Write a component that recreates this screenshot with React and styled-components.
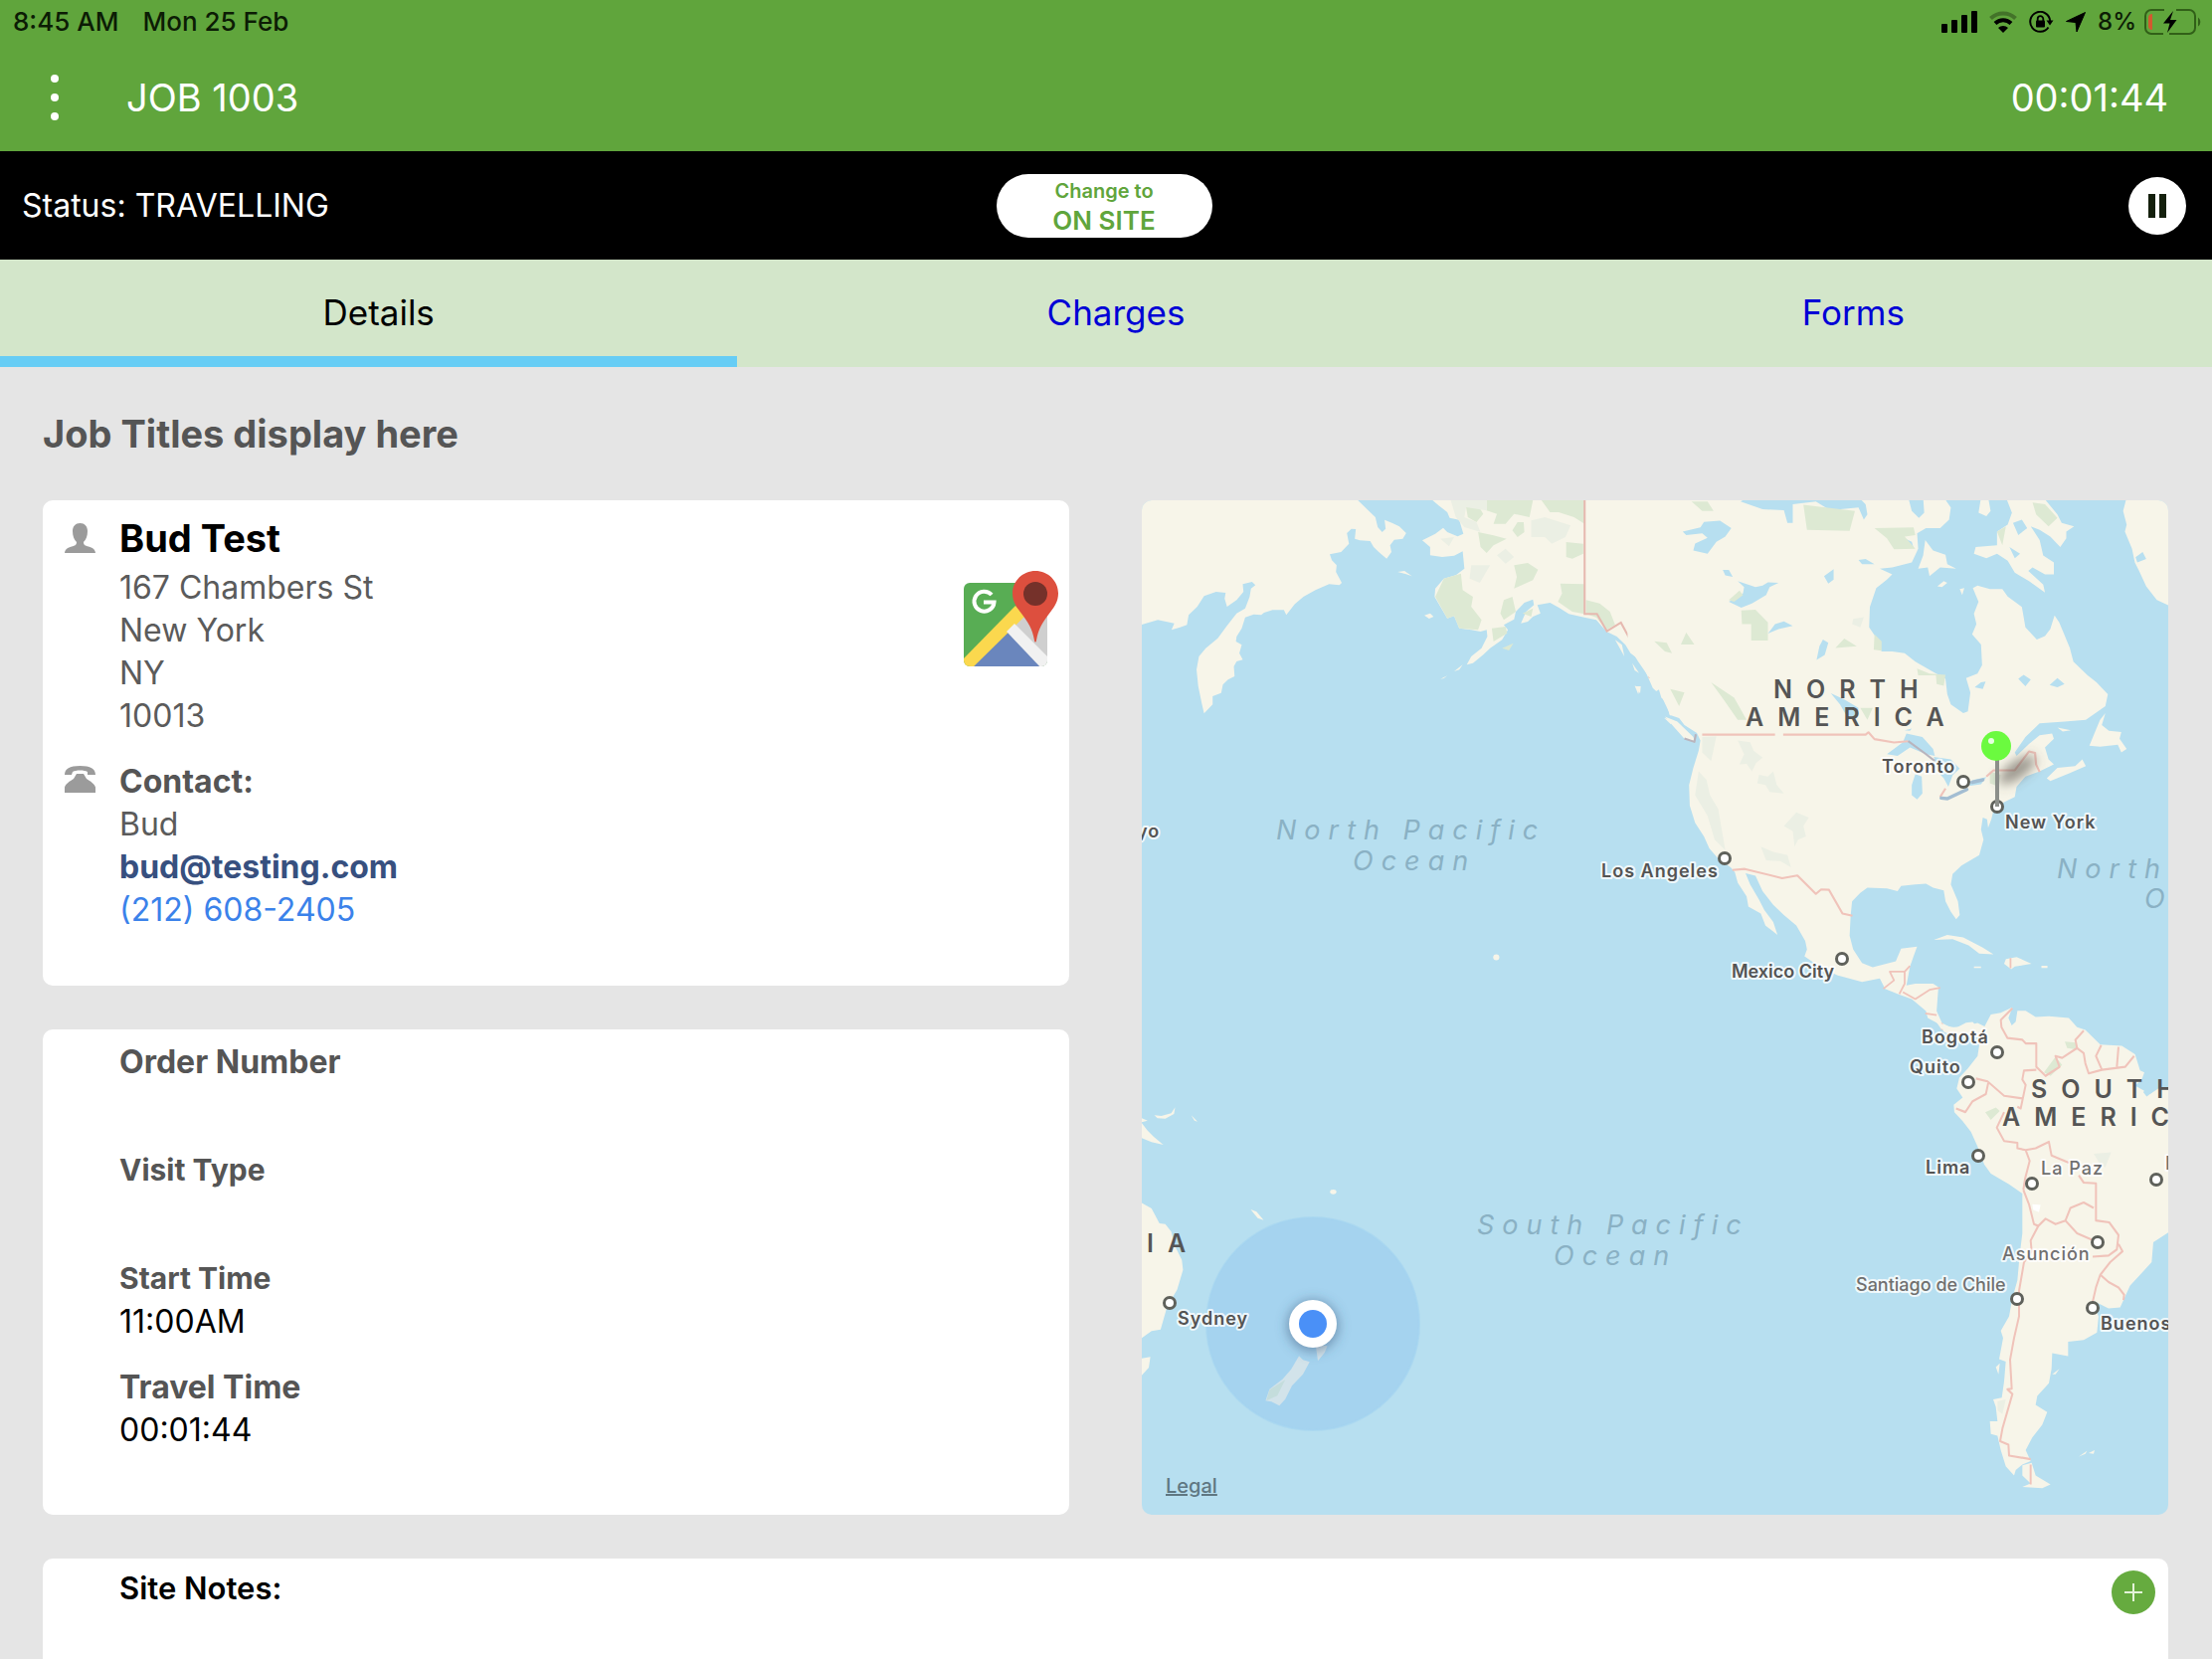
import React from "react";
import styled, { createGlobalStyle } from "styled-components";

const GlobalStyle = createGlobalStyle`
  *, *::before, *::after { box-sizing: border-box; }
  html, body { margin: 0; padding: 0; }
  body {
    background: #e5e5e5;
    color: #000;
    font-family: Inter, "Liberation Sans", sans-serif;
    font-size: 32px;
    line-height: 43px;
  }
  h1, h2, h3, p, dl, dt, dd { margin: 0; font: inherit; }
  button { border: 0; padding: 0; font: inherit; cursor: pointer; }
  a { text-decoration: none; }
  svg { display: block; }
`;

const Page = styled.div`
  height: 100vh;
  display: flex;
  flex-direction: column;
  overflow: hidden;
`;

/* ---------- header ---------- */

const Header = styled.header`
  flex: none;
  background: #60a53c;
`;

const SystemBar = styled.div`
  display: flex;
  justify-content: space-between;
  align-items: center;
  height: 44px;
  padding: 0 11px 0 13px;
  color: #0c1c05;
  line-height: 30px;
  font-weight: 500;
`;

const SystemGroup = styled.div`
  display: flex;
  align-items: center;
  gap: ${(p) => p.$gap}px;
  font-size: ${(p) => (p.$compact ? 24 : 26)}px;
`;

const Toolbar = styled.div`
  display: flex;
  align-items: center;
  height: 108px;
  padding: 0 44px 0 40px;
  color: #fff;
  font-size: 38px;
  line-height: 48px;
`;

const MenuButton = styled.button`
  display: flex;
  justify-content: center;
  align-items: center;
  width: 30px;
  height: 60px;
  margin-right: 57px;
  background: none;
`;

const ToolbarTitle = styled.h1`
  flex: 1;
`;

const Timer = styled.span``;

const StatusBar = styled.section`
  flex: none;
  display: grid;
  grid-template-columns: 1fr auto 1fr;
  align-items: center;
  height: 109px;
  padding: 0 26px 0 22px;
  background: #000;
  color: #fff;
`;

const StatusText = styled.span`
  font-size: 32px;
`;

const PillButton = styled.button`
  display: flex;
  flex-direction: column;
  align-items: center;
  justify-content: center;
  width: 217px;
  height: 64px;
  border-radius: 32px;
  background: #fff;
  color: #60a53c;
  line-height: 30px;
`;

const PillHint = styled.span`
  font-size: 20px;
  font-weight: 600;
`;

const PillAction = styled.span`
  font-size: 26px;
  font-weight: 600;
`;

const RoundButton = styled.button`
  justify-self: end;
  display: flex;
  align-items: center;
  justify-content: center;
  width: ${(p) => p.$size}px;
  height: ${(p) => p.$size}px;
  border-radius: 50%;
  background: ${(p) => p.$color};
`;

const Tabs = styled.nav`
  flex: none;
  display: grid;
  grid-template-columns: repeat(3, 1fr);
  height: 108px;
  background: #d3e6ca;
`;

const Tab = styled.a`
  display: flex;
  align-items: center;
  justify-content: center;
  padding: 10px 0 0 20px;
  border-bottom: 11px solid ${(p) => (p.$active ? "#66cdf5" : "transparent")};
  color: ${(p) => (p.$active ? "#000" : "#0000d6")};
  font-size: 35px;
`;

/* ---------- content ---------- */

const Main = styled.main`
  flex: 1;
  min-height: 0;
  display: flex;
  flex-direction: column;
  padding: 0 44px 0 43px;
`;

const JobTitle = styled.h2`
  padding: 43px 0;
  color: #555;
  font-size: 38px;
  line-height: 48px;
  font-weight: 700;
`;

const Columns = styled.div`
  flex: none;
  display: grid;
  grid-template-columns: 1fr 1fr;
  gap: 73px;
`;

const Cards = styled.div`
  display: grid;
  grid-auto-rows: 1fr;
  gap: 44px;
`;

const Card = styled.section`
  display: flex;
  flex-direction: column;
  gap: 23px;
  padding: ${(p) => p.$top}px 10px 55px 22px;
  border-radius: 10px;
  background: #fff;
`;

const Entry = styled.div`
  display: grid;
  grid-template-columns: 31px 1fr auto;
  column-gap: 24px;
  align-items: start;
`;

const EntryIcon = styled.span`
  padding-top: ${(p) => p.$top}px;
`;

const EntryBody = styled.div`
  grid-column: 2;
`;

const ClientName = styled.h3`
  margin-bottom: 4px;
  font-size: 38px;
  line-height: 48px;
  font-weight: 700;
`;

const Line = styled.p`
  color: #5b5b5b;
`;

const Label = styled.p`
  color: #555;
  font-size: ${(p) => (p.$small ? 30 : 32)}px;
  font-weight: 700;
`;

const Value = styled.p`
  min-height: 43px;
`;

const EmailLink = styled.a`
  display: block;
  color: #37507f;
  font-weight: 700;
`;

const PhoneLink = styled.a`
  display: block;
  color: #3b82ea;
`;

const MapsButton = styled.button`
  margin-top: 57px;
  background: none;
`;

const NotesCard = styled.section`
  flex: 1;
  display: flex;
  justify-content: space-between;
  align-items: flex-start;
  margin-top: 44px;
  padding: 8px 13px 0 77px;
  border-radius: 10px 10px 0 0;
  background: #fff;
`;

const NotesTitle = styled.h3`
  font-size: 31px;
  font-weight: 600;
`;

const NotesAction = styled.div`
  padding-top: 4px;
`;

/* ---------- map ---------- */

const MapPanel = styled.section`
  position: relative;
  overflow: hidden;
  min-height: 0;
  border-radius: 10px;
  background: #b7dff0;
`;

const MapSvg = styled.svg`
  position: absolute;
  inset: 0;
  width: 100%;
  height: 100%;
`;

const Legal = styled.a`
  position: absolute;
  left: 24px;
  bottom: 16px;
  color: #5f7782;
  font-size: 20px;
  line-height: 26px;
  font-weight: 500;
  text-decoration: underline;
`;

const CityText = styled.text`
  fill: ${(p) => (p.$minor ? "#707070" : "#545454")};
  stroke: #ffffffcc;
  stroke-width: 4px;
  stroke-linejoin: round;
  paint-order: stroke;
  font-size: 18px;
  font-weight: ${(p) => (p.$minor ? 500 : 600)};
  letter-spacing: ${(p) => (p.$long ? 0 : 1)}px;
`;

const ContinentText = styled.text`
  fill: #555;
  font-size: 25px;
  font-weight: 600;
  letter-spacing: 14px;
`;

const OceanText = styled.text`
  fill: #8ab1c4;
  font-size: 27px;
  font-style: italic;
  letter-spacing: 8px;
`;

const LAND = "#f7f5e9";
const WATER = "#b7dff0";
const PARK = "#dde9d3";
const PALE = "#ebefe4";

const CITIES = [
  { name: "Los Angeles", x: 1734, y: 863, tx: 1610, ty: 882 },
  { name: "Toronto", x: 1974, y: 786, tx: 1892, ty: 777 },
  { name: "New York", x: 2008, y: 811, tx: 2016, ty: 833 },
  { name: "Mexico City", x: 1852, y: 964, tx: 1741, ty: 983, long: true },
  { name: "Bogotá", x: 2008, y: 1058, tx: 1932, ty: 1049 },
  { name: "Quito", x: 1979, y: 1088, tx: 1920, ty: 1079 },
  { name: "Lima", x: 1989, y: 1162, tx: 1936, ty: 1180 },
  { name: "La Paz", x: 2043, y: 1190, tx: 2052, ty: 1181, minor: true },
  { name: "B", x: 2168, y: 1186, tx: 2177, ty: 1176, minor: true },
  { name: "Asunción", x: 2109, y: 1249, tx: 2013, ty: 1267, minor: true },
  { name: "Santiago de Chile", x: 2028, y: 1306, tx: 1866, ty: 1298, minor: true, long: true },
  { name: "Buenos", x: 2104, y: 1315, tx: 2112, ty: 1337 },
  { name: "Sydney", x: 1176, y: 1310, tx: 1184, ty: 1332 },
];

function BeringRegion() {
  return (
    <g transform="translate(1140 500) scale(.3444 .3333)">
      <g fill={LAND}>
        <path d="M20,0 L645,0 L680,35 L705,60 L712,90 L725,105 L735,95 L732,68 L755,78 L775,88 L795,108 L785,125 L760,128 L748,145 L752,165 L738,185 L715,165 L700,150 L690,132 L660,130 L645,125 L648,96 L635,95 L622,108 L628,140 L605,165 L572,172 L578,190 L592,205 L590,225 L607,258 L600,265 L570,262 L530,280 L495,300 L470,322 L445,355 L438,340 L405,340 L380,348 L372,355 L350,353 L325,362 L315,395 L300,420 L298,435 L315,445 L308,470 L318,490 L300,495 L292,510 L294,540 L275,550 L260,565 L255,590 L230,600 L230,625 L205,652 L198,620 L188,570 L183,520 L190,480 L210,455 L245,425 L270,390 L300,350 L325,335 L338,300 L342,275 L355,265 L345,255 L318,262 L320,285 L300,310 L272,330 L265,305 L268,288 L240,285 L205,298 L185,330 L160,355 L155,385 L135,392 L110,400 L118,380 L70,370 L20,385Z" />
        <path d="M862,0 L890,25 L915,45 L922,62 L950,68 L962,110 L945,118 L915,105 L903,92 L880,110 L842,130 L865,150 L865,175 L900,180 L935,176 L960,163 L965,215 L940,235 L905,245 L880,275 L878,300 L895,330 L915,365 L935,358 L950,395 L985,400 L1012,405 L1030,400 L1032,420 L1015,455 L985,480 L972,505 L990,500 L1020,475 L1040,455 L1075,430 L1092,400 L1080,385 L1110,368 L1115,345 L1140,318 L1165,308 L1168,325 L1145,345 L1130,380 L1150,375 L1165,360 L1187,350 L1178,325 L1215,318 L1240,332 L1270,352 L1315,362 L1350,370 L1380,405 L1410,420 L1435,445 L1450,470 L1478,492 L1500,540 L1515,575 L1525,585 L1540,575 L1545,610 L1568,660 L1568,0Z" />
        <path d="M935,525 L960,505 L950,520Z M895,548 L915,538 L905,546Z M770,225 L790,222 L812,238 L795,232Z M848,356 L865,350 L875,360 L862,366Z M1465,570 L1480,570 L1478,592Z M1405,430 L1425,445 L1432,480Z M1455,500 L1475,530 L1462,522Z M1548,665 L1568,672 L1568,685Z" />
        <circle cx="1058" cy="1388" r="9" />
      </g>
      <g fill={PARK}>
        <path d="M970,30 L1005,25 L1020,50 L1000,75 L975,60Z M1030,9 H1165 L1155,60 L1110,50 L1085,80 L1050,80 L1060,50 L1030,40Z M1105,100 L1120,75 L1138,75 L1140,105 L1120,120Z M1005,105 L1050,115 L1088,125 L1050,145 L1030,168 L1012,150Z M1190,9 H1316 V80 L1285,60 L1240,45 L1215,45Z M1262,135 L1312,140 V170 L1280,185 L1262,180Z M1110,205 L1150,198 L1180,218 L1165,250 L1110,275 L1118,240Z M1245,260 L1316,262 V352 L1280,345 L1238,315 L1250,290Z M905,245 L955,230 L960,280 L990,300 L985,330 L1015,370 L1005,400 L950,395 L935,358 L915,365 L880,300Z M1080,310 L1105,300 L1115,345 L1080,370 L1070,350Z M1045,395 L1085,390 L1090,410 L1050,435Z M1135,350 L1165,335 L1160,360Z M1075,455 L1108,440 L1095,462Z M1320,310 L1360,320 L1390,345 L1405,385 L1380,400 L1350,362 L1320,352Z M1520,432 L1568,445 V475Z" />
      </g>
      <path fill={PALE} d="M925,9 H1030 L1030,40 L970,30 L965,60 L1000,75 L1012,105 L965,90 L940,60Z M1160,70 L1200,60 L1275,85 L1260,120 L1220,140 L1200,120 L1160,120Z M985,205 L1040,205 L1010,258 L980,245Z M1060,175 L1085,155 L1110,180 L1085,200Z M895,125 L935,120 L920,148Z" />
      <path fill="none" stroke="#e6b9b0" strokeWidth="6" d="M1316,9 V352 H1352 L1381,404 L1422,378 L1470,470 L1512,497 L1505,545" />
    </g>
  );
}

function NorthAmerica() {
  return (
    <g transform="translate(1640 500) scale(.35714 .34436)">
      <g fill={LAND}>
        <path d="M-10,0 L-10,430 L20,480 L50,525 L75,550 L85,585 L100,600 L108,635 L135,645 L150,665 L185,688 L195,710 L190,740 L175,790 L163,840 L165,900 L180,950 L205,990 L220,1025 L245,1055 L280,1080 L292,1095 L300,1125 L325,1165 L330,1195 L365,1215 L378,1250 L412,1278 L400,1240 L375,1205 L360,1175 L335,1130 L322,1098 L350,1105 L370,1150 L400,1190 L430,1220 L465,1250 L490,1295 L495,1320 L488,1340 L530,1370 L580,1395 L650,1415 L700,1405 L715,1435 L755,1452 L790,1465 L830,1500 L835,1520 L870,1540 L880,1560 L900,1570 L1010,1580 L1005,1550 L975,1535 L940,1545 L900,1548 L875,1535 L860,1500 L865,1430 L850,1420 L800,1420 L775,1425 L785,1370 L795,1340 L805,1312 L760,1318 L745,1355 L680,1372 L650,1360 L625,1320 L615,1280 L618,1220 L622,1180 L645,1155 L665,1140 L720,1142 L750,1150 L760,1135 L800,1130 L830,1128 L850,1140 L880,1148 L885,1180 L900,1210 L915,1232 L925,1220 L920,1180 L900,1130 L905,1100 L930,1075 L980,1045 L992,1000 L985,970 L990,935 L1002,940 L1005,965 L1014,940 L1020,915 L1050,890 L1080,875 L1085,845 L1110,815 L1150,800 L1190,780 L1175,765 L1165,730 L1190,705 L1185,690 L1150,695 L1120,720 L1085,755 L1080,745 L1110,700 L1150,660 L1220,655 L1280,650 L1335,610 L1342,575 L1310,540 L1285,520 L1245,480 L1235,440 L1215,390 L1205,365 L1192,345 L1180,385 L1165,405 L1142,415 L1110,380 L1100,320 L1060,290 L1045,268 L1010,268 L975,258 L962,265 L978,305 L965,340 L972,370 L960,400 L985,430 L988,490 L975,515 L943,528 L955,570 L948,625 L935,630 L900,605 L890,575 L885,530 L850,510 L800,480 L770,455 L735,450 L705,450 L690,410 L670,380 L672,320 L690,265 L720,240 L735,225 L700,208 L735,205 L790,190 L808,150 L805,105 L830,90 L870,90 L895,65 L900,30 L880,0Z" />
        <path d="M1055,0 L1160,0 L1200,50 L1212,75 L1247,85 L1225,100 L1225,120 L1208,145 L1180,115 L1150,95 L1125,85 L1150,125 L1160,170 L1190,190 L1190,225 L1165,225 L1130,205 L1118,215 L1160,255 L1165,278 L1120,245 L1080,220 L1060,185 L1030,165 L1000,178 L965,165 L970,145 L1030,140 L1030,100 L1060,80 L1072,45Z" />
        <path d="M828,125 L850,155 L885,168 L890,195 L915,208 L870,205 L840,230 L835,205 L808,208 L822,170Z M985,0 L1005,0 L1012,40 L1000,55 L978,45Z M862,260 L880,245 L890,250 L875,262Z M925,268 L938,265 L932,285Z" />
        <path d="M1395,0 L1512,0 V315 L1480,300 L1450,260 L1430,215 L1418,190 L1410,150 L1390,100 L1395,80 L1385,40Z" />
        <path d="M1335,630 L1325,665 L1345,682 L1380,685 L1375,705 L1395,735 L1380,745 L1370,722 L1320,728 L1290,725 L1300,700 L1320,650Z M1170,820 L1200,790 L1250,785 L1270,765 L1280,785 L1235,805 L1180,828Z M1200,672 L1238,680 L1215,684Z M95,640 L130,655 L175,700 L180,715 L150,705 L120,670Z M10,550 L25,555 L20,575Z" />
        <path d="M852,1292 L890,1278 L935,1285 L990,1315 L1020,1334 L980,1332 L950,1308 L905,1290Z M1055,1348 L1085,1342 L1127,1362 L1080,1370 L1070,1378 L1050,1362Z M965,1370 L985,1370 L985,1374 L965,1374Z M1155,1368 H1172 V1374 H1155Z" />
      </g>
      <g fill={WATER}>
        <path d="M308,12 L330,0 L640,0 L660,20 L665,50 L655,65 L640,30 L560,38 L520,12 L455,20 L455,75 L440,75 L430,38 L370,35Z M780,0 L822,0 L825,45 L810,60 L790,40Z" />
        <path d="M145,100 L195,88 L205,72 L250,68 L282,90 L265,115 L240,130 L215,165 L175,155 L180,135 L215,118 L200,105 L155,110Z M275,305 L315,280 L318,262 L300,245 L350,262 L370,258 L385,248 L415,250 L390,262 L380,285 L340,310 L310,322Z M258,212 L275,212 L286,232 L265,228Z M570,210 L570,240 L555,252 L543,230Z M385,398 L405,370 L430,362 L455,375 L415,385Z M540,415 L555,425 L545,460 L522,475 L530,435Z M562,572 L600,590 L640,615 L635,645 L605,635 L588,605Z" />
        <path d="M720,750 L765,715 L775,690 L820,700 L850,735 L855,755 L830,750 L785,730 L750,755Z M800,808 L818,815 L820,865 L805,882 L790,870 L790,840Z M852,758 L900,765 L925,792 L905,812 L893,845 L880,820 L862,800Z M945,835 L965,825 L1000,817 L985,838 L955,842Z M967,555 L985,540 L998,538 L990,560Z M1090,530 L1105,518 L1125,532 L1110,552Z M1178,548 L1200,528 L1220,545 L1200,555Z M1075,75 L1100,65 L1115,90 L1090,110Z M1065,145 L1095,165 L1080,178Z M1420,175 L1440,160 L1450,180 L1425,190Z M640,183 L660,180 L685,195 L650,195Z M750,110 L790,130 L795,148 L765,140Z M790,675 L770,680 L785,682Z" />
      </g>
      <path fill={PARK} d="M485,22 L630,40 L615,98 L495,95Z M170,12 H215 L232,40 L200,40Z M685,90 L795,88 L800,110 L770,115 L800,150 L740,152 L720,120Z M310,330 L350,328 L385,365 V418 H338 V370 H312Z M225,540 L290,585 L325,650 L300,650 L260,590Z M65,420 L100,425 L115,455 L95,450Z M140,430 L155,395 L178,430Z M110,560 L150,570 L135,610Z M575,440 L600,412 L635,435Z M685,400 L705,420 L705,448 L683,445Z M805,500 L840,515 L885,518 L880,550 L860,545 L858,520 L808,520Z M1130,15 L1165,20 L1200,60 L1175,85 L1140,50Z M1030,100 L1055,85 L1045,140Z M275,300 L305,272 L315,285 L290,305Z M645,615 L680,615 L665,650Z M1010,800 L1040,810 L1035,845 L1010,835Z" />
      <path fill={PALE} d="M200,700 L240,698 L225,770 L200,745Z M300,710 L335,715 L345,740 L370,760 L352,775 L340,800 L325,778 L305,780 L318,750Z M360,810 L385,815 L400,800 L410,840 L430,865 L390,860 L378,840 L355,835Z M190,800 L212,825 L222,870 L245,910 L265,1030 L235,1000 L215,930 L180,870Z M430,960 L465,920 L500,935 L485,960 L492,990 L470,1000 L460,1020 L455,975Z M365,1020 L400,1035 L440,1045 L450,1080 L420,1062 L380,1060Z M625,355 L655,350 L645,380 L622,370Z" />
      <g fill="none" stroke="#f0c3ba" strokeWidth="6" strokeLinejoin="round">
        <path d="M200,693 H405 M428,693 H660 L668,686 L685,706 L740,716 L780,712" />
        <path d="M285,1088 L320,1085 L425,1112 L468,1104 L520,1158 L535,1145 L557,1146 L595,1215 L623,1222" />
        <path d="M1000,815 L1020,797 L1080,797 L1120,742 L1137,746 L1140,780 L1150,802 M870,875 L885,850" />
        <path d="M710,1435 L740,1410 L728,1385 H770 L785,1368 M770,1385 V1420 L755,1450 M765,1445 L800,1465 L840,1438 L870,1432 M828,1507 L860,1512 M875,1535 V1555 M1068,1345 V1375" strokeWidth="5" />
      </g>
      <path fill="none" stroke="#b9b4bd" strokeWidth="6" strokeLinejoin="round" d="M780,712 L830,750 L855,770 M150,704 L178,714 L182,692" />
      <path fill="none" stroke="#a3bdd2" strokeWidth="10" strokeLinecap="round" d="M873,878 L890,880 L945,853 M960,832 L990,825" />
    </g>
  );
}

function SouthAmerica() {
  return (
    <g transform="translate(1700 960) scale(.33333 .36351)">
      <g fill={LAND}>
        <path d="M735,178 L765,195 L800,202 L830,188 L850,186 L870,205 L885,200 L905,165 L935,160 L970,145 L958,175 L968,195 L980,185 L985,155 L1010,155 L1040,172 L1080,170 L1140,175 L1165,200 L1190,208 L1235,248 L1300,252 L1340,275 L1355,320 L1368,325 L1360,345 L1340,362 L1385,385 L1410,370 L1445,375 V765 L1395,795 L1390,850 L1355,885 L1325,915 L1310,945 L1295,975 L1260,978 L1210,955 L1230,1000 L1225,1045 L1185,1065 L1138,1070 L1138,1110 L1090,1102 L1088,1145 L1080,1185 L1045,1220 L1040,1245 L1075,1265 L1060,1300 L1030,1335 L1010,1370 L1025,1400 L1000,1410 L980,1425 L975,1440 L950,1415 L935,1370 L925,1330 L905,1325 L902,1290 L925,1290 L920,1250 L912,1230 L938,1225 L945,1180 L950,1125 L930,1118 L942,1060 L935,1040 L960,1000 L970,950 L985,900 L992,830 L1000,770 L1000,660 L960,635 L905,605 L885,580 L865,530 L845,490 L820,460 L795,435 L793,415 L820,395 L802,370 L810,340 L835,315 L865,280 L870,250 L868,220 L860,205 L840,198 L800,212 L755,205Z" />
        <path d="M1000,1412 L1028,1405 L1040,1440 L1085,1465 L1060,1475 L1000,1472 L1025,1462 L1000,1440Z M1170,1388 L1195,1372 L1190,1380Z M1200,1378 L1218,1370 L1215,1380Z M1090,1160 L1112,1145 L1100,1160Z M920,1140 L932,1130 L928,1160Z" />
      </g>
      <path fill={PARK} d="M1065,325 L1100,282 L1120,305 L1085,335Z M1128,240 L1160,243 L1165,262 L1135,258Z M888,435 L920,422 L932,432 L905,457Z" />
      <path fill={PALE} d="M1215,550 L1268,546 L1250,588 L1235,580Z M925,1235 L950,1230 L940,1270 L925,1260Z" />
      <path fill={WATER} d="M1365,380 L1380,352 L1415,362 L1385,385 L1375,392Z" />
      <path fill="#fff" d="M1030,690 L1055,692 L1050,712 L1032,705Z" />
      <g fill="none" stroke="#f0c3ba" strokeWidth="6" strokeLinejoin="round">
        <path d="M970,148 L935,180 L937,200 L955,230 L1000,235 L1010,245 L1042,245 L1042,310 L1070,335 L1112,310 L1100,280 L1120,285 L1165,258 L1160,235 L1185,210" />
        <path d="M1165,258 L1185,272 L1190,300 L1200,328 L1240,318 L1310,310 L1337,280 M1238,250 L1222,280 L1240,318 M1290,255 L1285,310" />
        <path d="M1042,318 L1005,320 L1000,345 L1010,360 L995,425 L985,420 M1000,397 L945,390 L895,350 L860,342 M897,355 L890,385 L850,405 L828,435 L800,425" />
        <path d="M945,435 L923,478 L945,515 L985,520 L985,535 L1010,540 L1022,570 L1008,620 L1003,650 M1010,540 L1040,535 L1080,517 L1088,555 L1140,575 M1170,610 L1185,630 L1222,632 L1222,735 L1262,740 L1290,775 L1285,815 L1260,832 L1212,835" />
        <path d="M1003,650 L1020,690 L1035,745 L1048,750 L1070,730 L1100,745 L1130,735 L1145,700 L1185,685 L1215,700 M1130,735 L1165,770 L1215,790" />
        <path d="M1048,750 L1025,790 L1028,820 L1005,850 L990,930 L990,1000 L975,1060 L963,1120 L968,1200 L955,1202 L970,1215 L940,1310 L933,1345 L958,1355 L960,1385 L1025,1395 M1025,1410 V1465" />
        <path d="M1290,800 L1302,820 L1265,850 L1235,885 L1222,920 L1212,960 M1235,885 L1260,905 L1290,920 L1307,940 L1305,955" />
      </g>
    </g>
  );
}

function Oceania() {
  return (
    <g transform="translate(1140 1080) scale(.3954 .3333)" fill={LAND}>
      <path d="M15,385 L45,405 L65,450 L80,452 L95,475 L105,520 L122,560 L125,590 L110,650 L85,700 L68,770 L45,775 L15,800Z M15,858 L42,853 L38,885 L15,915Z M15,140 L35,170 L50,188 L75,213 L45,205 L15,190Z M15,130 L35,140 L15,146Z M52,124 L70,126 L95,118 L105,100 L102,120 L80,134 L60,133Z M297,408 L312,415 L330,440 L315,434Z M146,124 L162,143 L154,140Z" />
      <ellipse cx="507" cy="355" rx="8" ry="7" />
      <path d="M335,985 L345,950 L378,920 L400,890 L420,850 L430,862 L447,868 L430,905 L402,940 L385,980 L370,1000 L350,988Z M462,815 L492,820 L485,840 L468,865Z" />
      <path fill="#e3ecd5" d="M337,985 L345,952 L385,922 L365,970Z" />
    </g>
  );
}

function WorldMap() {
  return (
    <MapSvg viewBox="1148 503 1032 1020" preserveAspectRatio="xMidYMid slice" role="img" aria-label="Map">
      <defs>
        <filter id="soft" x="-100%" y="-100%" width="300%" height="300%">
          <feGaussianBlur stdDeviation="6" />
        </filter>
      </defs>
      <BeringRegion />
      <NorthAmerica />
      <SouthAmerica />
      <Oceania />

      <circle cx="1320" cy="1331" r="107" fill="#7fb9f0" fillOpacity=".3" stroke="#a4d3f0" strokeOpacity=".6" strokeWidth="2" />

      <ContinentText x="1783" y="702">NORTH</ContinentText>
      <ContinentText x="1755" y="730">AMERICA</ContinentText>
      <ContinentText x="2042" y="1104">SOUTH</ContinentText>
      <ContinentText x="2013" y="1132">AMERIC</ContinentText>
      <ContinentText x="1153" y="1259">IA</ContinentText>

      <OceanText x="1283" y="844">North Pacific</OceanText>
      <OceanText x="1360" y="875">Ocean</OceanText>
      <OceanText x="1485" y="1241">South Pacific</OceanText>
      <OceanText x="1562" y="1272">Ocean</OceanText>
      <OceanText x="2068" y="883">North</OceanText>
      <OceanText x="2156" y="913">O</OceanText>

      <CityText x="1143" y="842">yo</CityText>
      {CITIES.map((c) => (
        <g key={c.name}>
          <circle cx={c.x} cy={c.y} r="5.5" fill="#fff" stroke="#5f615b" strokeWidth="3" />
          <CityText x={c.tx} y={c.ty} $minor={c.minor} $long={c.long}>{c.name}</CityText>
        </g>
      ))}

      <ellipse cx="2028" cy="774" rx="22" ry="8" transform="rotate(-35 2028 774)" fill="#55504a" fillOpacity=".6" filter="url(#soft)" />
      <path d="M2008 760V811" stroke="#8c8f8a" strokeWidth="4" />
      <circle cx="2007" cy="750" r="15" fill="#6bfa3f" />
      <circle cx="2002" cy="745" r="3" fill="#e6ffe0" />

      <circle cx="1320" cy="1333" r="26" fill="#3b5878" fillOpacity=".5" filter="url(#soft)" />
      <circle cx="1320" cy="1331" r="24" fill="#fff" />
      <circle cx="1320" cy="1331" r="14" fill="#4a90f7" />
    </MapSvg>
  );
}

/* ---------- icons ---------- */

const SignalIcon = () => (
  <svg width="36" height="22" viewBox="0 0 36 22" fill="#000">
    <rect x="0" y="13" width="6" height="9" rx="1" />
    <rect x="10" y="9" width="6" height="13" rx="1" />
    <rect x="20" y="4" width="6" height="18" rx="1" />
    <rect x="30" y="0" width="6" height="22" rx="1" />
  </svg>
);

const WifiIcon = () => (
  <svg width="28" height="22" viewBox="0 0 28 22" fill="none" stroke="#000" strokeWidth="4">
    <path d="M1.500 7.500a18 18 0 0 1 25 0" strokeOpacity=".3" />
    <path d="M6 12.500a11.500 11.500 0 0 1 16 0" />
    <path d="M14 22l-5-5a7.200 7.200 0 0 1 10 0z" fill="#000" stroke="none" />
  </svg>
);

const RotationLockIcon = () => (
  <svg width="25" height="22" viewBox="0 0 25 22" fill="none" stroke="#000" strokeWidth="2">
    <path d="M19.500 16.500A10 10 0 1 1 21.200 10" />
    <path d="M17.500 9.500h7l-3.500 5z" fill="#000" stroke="none" />
    <rect x="7" y="9.500" width="9" height="7" rx="1" fill="#000" stroke="none" />
    <path d="M8.700 10V8a2.800 2.800 0 0 1 5.600 0v2" strokeWidth="1.800" />
  </svg>
);

const LocationIcon = () => (
  <svg width="20" height="20" viewBox="0 0 20 20" fill="#000">
    <path d="M19.500.500L11 20l-1-9.500L.500 9.500z" stroke="#000" strokeLinejoin="round" />
  </svg>
);

const BatteryIcon = () => (
  <svg width="57" height="26" viewBox="0 0 57 26">
    <path d="M20 1H7a6 6 0 0 0-6 6v12a6 6 0 0 0 6 6h12M32 1h13a6 6 0 0 1 6 6v12a6 6 0 0 1-6 6H25" fill="none" stroke="#316018" strokeWidth="2" />
    <path d="M54 8.500a5.500 5.500 0 0 1 0 9z" fill="#316018" />
    <path d="M8 5v16a4 4 0 0 1-4-4V9a4 4 0 0 1 4-4z" fill="#d2592f" />
    <path d="M29 2L19 14.500h6.500L23 24l9.500-13H26z" fill="#000" />
  </svg>
);

const KebabIcon = () => (
  <svg width="8" height="46" viewBox="0 0 8 46" fill="#fff">
    <circle cx="4" cy="4" r="4" />
    <circle cx="4" cy="23" r="4" />
    <circle cx="4" cy="42" r="4" />
  </svg>
);

const PauseIcon = () => (
  <svg width="18" height="24" viewBox="0 0 18 24" fill="#14200d">
    <rect width="7" height="24" />
    <rect x="11" width="7" height="24" />
  </svg>
);

const PlusIcon = () => (
  <svg width="18" height="18" viewBox="0 0 18 18" stroke="#e3f3d8" strokeWidth="2">
    <path d="M9 0v18M0 9h18" />
  </svg>
);

const PersonIcon = () => (
  <svg width="31" height="30" viewBox="0 0 31 30" fill="#9b9b9b">
    <path d="M15.500 0C20 0 23 3 23 8c0 5-1.500 8.500-4 11 0 3 1.500 3.500 5 4.500 4 1.200 6.500 2.500 7 6.500H0c.500-4 3-5.300 7-6.500 3.500-1 5-1.500 5-4.500-2.500-2.500-4-6-4-11 0-5 3-8 7.500-8z" />
  </svg>
);

const PhoneIcon = () => (
  <svg width="31" height="27" viewBox="0 0 31 27" fill="#9b9b9b">
    <path d="M0 9C0 3 5 0 15.500 0S31 3 31 9h-8V6c-2-1-4-1.500-7.500-1.500S10 5 8 6l-1 3z" />
    <path d="M12 8h7l3 5c4 2.500 8 5 9 8.500V27H0v-5.500c1-3.500 5-6 9-8.500z" />
  </svg>
);

const MapsLogo = () => (
  <svg width="96" height="96" viewBox="0 0 96 96">
    <defs>
      <clipPath id="tile"><rect x="0" y="12" width="84" height="84" rx="6" /></clipPath>
    </defs>
    <g clipPath="url(#tile)">
      <rect y="12" width="84" height="84" fill="#58ad54" />
      <path d="M58 34L84 20V96H40z" fill="#cfcfcf" />
      <path d="M43 60L78 96H8z" fill="#6a86bd" />
      <path d="M-4 92L52 35l10 10L4 102z" fill="#fbd84e" />
      <path d="M43 61l8-8 37 37-8 10z" fill="#f1f1f1" />
    </g>
    <path d="M72 0c12.500 0 23 10 23 22.500 0 8-3.500 13-8 19C79 52 75 58 73 70c-.300 2-1.700 2-2 0-2-12-6-18-14-28.500-4.500-6-8-11-8-19C49 10 59.500 0 72 0z" fill="#dd4f3e" />
    <circle cx="72" cy="23" r="12" fill="#75312a" />
    <path d="M28 24a10 10 0 1 0 2.500 7.500H20" fill="none" stroke="#fff" strokeWidth="4" />
  </svg>
);

/* ---------- page ---------- */

const VISIT = [
  { label: "Order Number", value: "" },
  { label: "Visit Type", value: "", small: true },
  { label: "Start Time", value: "11:00AM", small: true },
  { label: "Travel Time", value: "00:01:44" },
];

export default function App() {
  return (
    <Page>
      <GlobalStyle />
      <Header>
        <SystemBar>
          <SystemGroup $gap={24}>
            <span>8:45 AM</span>
            <span>Mon 25 Feb</span>
          </SystemGroup>
          <SystemGroup $gap={12} $compact>
            <SignalIcon />
            <WifiIcon />
            <RotationLockIcon />
            <LocationIcon />
            <SystemGroup $gap={8} $compact>
              <span>8%</span>
              <BatteryIcon />
            </SystemGroup>
          </SystemGroup>
        </SystemBar>
        <Toolbar>
          <MenuButton aria-label="Menu"><KebabIcon /></MenuButton>
          <ToolbarTitle>JOB 1003</ToolbarTitle>
          <Timer>00:01:44</Timer>
        </Toolbar>
      </Header>

      <StatusBar>
        <StatusText>Status: TRAVELLING</StatusText>
        <PillButton>
          <PillHint>Change to</PillHint>
          <PillAction>ON SITE</PillAction>
        </PillButton>
        <RoundButton $size={58} $color="#fff" aria-label="Pause"><PauseIcon /></RoundButton>
      </StatusBar>

      <Tabs>
        <Tab href="#details" $active aria-current="page">Details</Tab>
        <Tab href="#charges">Charges</Tab>
        <Tab href="#forms">Forms</Tab>
      </Tabs>

      <Main>
        <JobTitle>Job Titles display here</JobTitle>
        <Columns>
          <Cards>
            <Card $top={14}>
              <Entry>
                <EntryIcon $top={9}><PersonIcon /></EntryIcon>
                <EntryBody>
                  <ClientName>Bud Test</ClientName>
                  <Line>167 Chambers St</Line>
                  <Line>New York</Line>
                  <Line>NY</Line>
                  <Line>10013</Line>
                </EntryBody>
                <MapsButton aria-label="Open in maps"><MapsLogo /></MapsButton>
              </Entry>
              <Entry>
                <EntryIcon $top={6}><PhoneIcon /></EntryIcon>
                <EntryBody>
                  <Label>Contact:</Label>
                  <Line>Bud</Line>
                  <EmailLink href="mailto:bud@testing.com">bud@testing.com</EmailLink>
                  <PhoneLink href="tel:+12126082405">(212) 608-2405</PhoneLink>
                </EntryBody>
              </Entry>
            </Card>
            <Card $top={11}>
              {VISIT.map((v) => (
                <Entry key={v.label}>
                  <EntryBody>
                    <Label $small={v.small}>{v.label}</Label>
                    <Value>{v.value}</Value>
                  </EntryBody>
                </Entry>
              ))}
            </Card>
          </Cards>
          <MapPanel>
            <WorldMap />
            <Legal href="#legal">Legal</Legal>
          </MapPanel>
        </Columns>
        <NotesCard>
          <NotesTitle>Site Notes:</NotesTitle>
          <NotesAction>
            <RoundButton $size={44} $color="#66ab3f" aria-label="Add note"><PlusIcon /></RoundButton>
          </NotesAction>
        </NotesCard>
      </Main>
    </Page>
  );
}
